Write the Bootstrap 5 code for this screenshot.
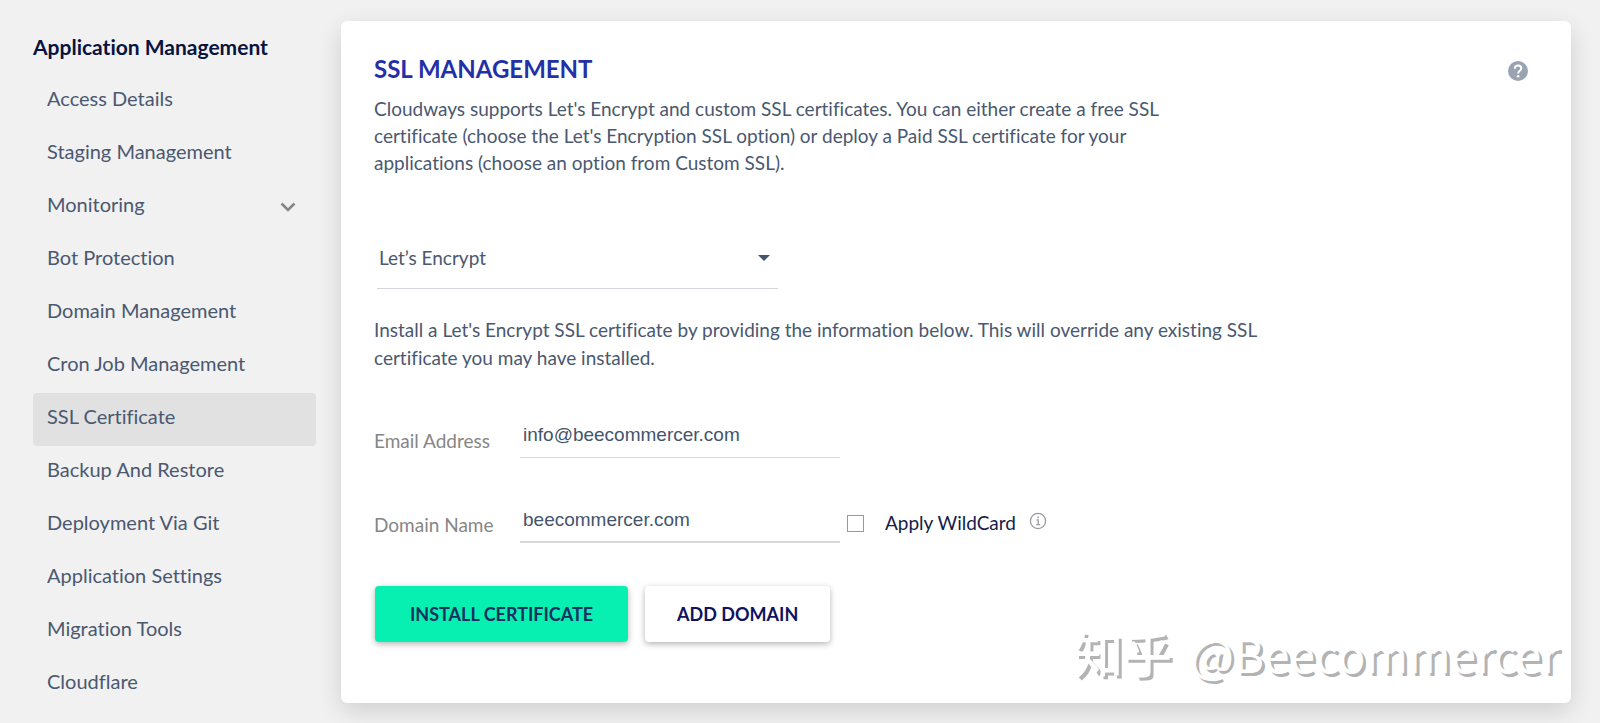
<!DOCTYPE html>
<html lang="en">
<head>
<meta charset="utf-8">
<meta name="viewport" content="width=device-width, initial-scale=1">
<title>SSL Management</title>
<link href="https://cdn.jsdelivr.net/npm/bootstrap@5.3.0/dist/css/bootstrap.min.css" rel="stylesheet">
<style>
  body { background: #f1f1f1; color: #4a5870; font-family: Lato, "Liberation Sans", sans-serif; font-size: 19px; line-height: 27px; font-variant-ligatures: none; }
  .app-shell { padding: 21px 29px 20px 33px; gap: 25px; }
  .side-menu { width: 283px; padding-top: 12px; }
  .side-title { font-size: 21px; line-height: 28px; margin-bottom: 14px; color: #0a1340; font-weight: 700; }
  .side-menu .nav-link { color: #4a5870; font-size: 20px; padding: 10px 14px 16px; border-radius: 4px; }
  .side-menu .nav-link.active { background: #e1e1e1; }
  .panel { border-radius: 6px; box-shadow: 0 8px 24px rgba(0, 0, 0, .14); padding: 32px 33px 61px; min-width: 0; }
  .panel-title { font-size: 24px; line-height: 32px; color: #2430a8; font-weight: 700; margin-bottom: 10px; }
  .intro { max-width: 840px; margin-bottom: 61px; }
  .hint { max-width: 920px; line-height: 28px; margin-bottom: 42px; }
  .line-select { width: 401px; height: 52px; margin: 0 3px 27px; padding: 0 32px 8px 2px; border: 0; border-bottom: 1px solid #d3d6da; border-radius: 0; color: #4a5870; font-size: 19px;
    background: #fff url("data:image/svg+xml,%3Csvg xmlns='http://www.w3.org/2000/svg' width='12' height='6'%3E%3Cpath d='M0 0h12L6 6z' fill='%2344546c'/%3E%3C/svg%3E") no-repeat right 8px top 18px / 12px 6px; }
  .field-label { width: 146px; color: #868686; padding-top: 13px; }
  .line-input { width: 320px; height: 44px; padding: 0 3px 1px; border: 0; border-bottom: 1px solid #d9d9d9; border-radius: 0; color: #44546c; font: 19px "Liberation Sans", sans-serif; }
  .line-input.thick { height: 45px; border-bottom-width: 2px; padding-bottom: 0; }
  .email-row { margin-bottom: 40px; }
  .domain-row { margin-bottom: 43px; }
  .wild-box.form-check-input { width: 17px; height: 17px; margin: 17px 21px 0 7px; border: 1px solid #9299a6; border-radius: 0; }
  .wild-label { color: #141c4a; padding-top: 11px; }
  .info-icon { margin: 14px 0 0 13px; }
  .actions { gap: 17px; padding-left: 1px; }
  .action { height: 56px; border: 0; border-radius: 4px; padding: 0 32px; font-size: 18px; font-weight: 700; box-shadow: 0 2px 6px rgba(0, 0, 0, .3); }
  .action-main, .action-main:hover { padding: 0 35px; background: #08f0b1; color: #16305f; }
  .action-plain, .action-plain:hover { background: #fff; color: #10125e; }
  .help-icon { margin: 8px 10px 0 0; }
  .watermark { position: absolute; right: 12px; bottom: 18px; font-family: "Noto Sans CJK SC", sans-serif; font-size: 46px; line-height: 64px; color: #fff; text-shadow: 3px 3px 0 #b3b3b3; white-space: nowrap; pointer-events: none; }
  .watermark-site { font-size: 49px; font-weight: 500; margin-right: 8px; }
</style>
</head>
<body>
<div class="app-shell d-flex align-items-start">
  <aside class="side-menu flex-shrink-0">
    <h2 class="side-title">Application Management</h2>
    <nav class="nav flex-column">
      <a class="nav-link" href="#">Access Details</a>
      <a class="nav-link" href="#">Staging Management</a>
      <a class="nav-link d-flex justify-content-between align-items-center" href="#">Monitoring
        <svg class="me-1" width="20" height="20" viewBox="0 0 20 20" fill="none" stroke="#868686" stroke-width="2.6" aria-hidden="true"><path d="M3.500 8.500l6.500 6.500 6.500-6.500"/></svg>
      </a>
      <a class="nav-link" href="#">Bot Protection</a>
      <a class="nav-link" href="#">Domain Management</a>
      <a class="nav-link" href="#">Cron Job Management</a>
      <a class="nav-link active" href="#" aria-current="page">SSL Certificate</a>
      <a class="nav-link" href="#">Backup And Restore</a>
      <a class="nav-link" href="#">Deployment Via Git</a>
      <a class="nav-link" href="#">Application Settings</a>
      <a class="nav-link" href="#">Migration Tools</a>
      <a class="nav-link" href="#">Cloudflare</a>
    </nav>
  </aside>

  <main class="panel bg-white flex-grow-1 position-relative">
    <div class="d-flex justify-content-between align-items-start">
      <h1 class="panel-title">SSL MANAGEMENT</h1>
      <a class="help-icon d-flex" href="#" aria-label="Help">
        <svg width="20" height="20" viewBox="0 0 20 20" aria-hidden="true"><circle cx="10" cy="10" r="10" fill="#9aa3b2"/><path d="M6.800 7.800c0-2 1.400-3.300 3.300-3.300s3.200 1.200 3.200 2.900c0 2.300-3.200 2.500-3.200 5" fill="none" stroke="#fff" stroke-width="2"/><circle cx="10.100" cy="15.200" r="1.300" fill="#fff"/></svg>
      </a>
    </div>
    <p class="intro">Cloudways supports Let's Encrypt and custom SSL certificates. You can either create a free SSL certificate (choose the Let's Encryption SSL option) or deploy a Paid SSL certificate for your applications (choose an option from Custom SSL).</p>

    <form>
      <select class="form-select line-select" aria-label="Certificate type">
        <option selected>Let’s Encrypt</option>
        <option>Custom SSL</option>
      </select>
      <p class="hint">Install a Let's Encrypt SSL certificate by providing the information below. This will override any existing SSL certificate you may have installed.</p>

      <div class="email-row d-flex align-items-start">
        <label class="field-label" for="email">Email Address</label>
        <input class="form-control line-input" id="email" type="email" value="info@beecommercer.com">
      </div>
      <div class="domain-row d-flex align-items-start">
        <label class="field-label" for="domain">Domain Name</label>
        <input class="form-control line-input thick" id="domain" type="text" value="beecommercer.com">
        <input class="form-check-input wild-box" id="wildcard" type="checkbox">
        <label class="wild-label" for="wildcard">Apply WildCard</label>
        <svg class="info-icon" width="18" height="18" viewBox="0 0 18 18" fill="none" stroke="#9a9a9f" stroke-width="1.300" aria-hidden="true"><circle cx="9" cy="9" r="7.600"/><path d="M7.500 7.800h1.700v4.700M7.200 12.600h4"/><circle cx="9" cy="5.300" r=".9" fill="#9a9a9f" stroke="none"/></svg>
      </div>
      <div class="actions d-flex">
        <button class="btn action action-main" type="submit">INSTALL CERTIFICATE</button>
        <button class="btn action action-plain" type="button">ADD DOMAIN</button>
      </div>
    </form>
    <div class="watermark" lang="zh"><span class="watermark-site">知乎</span> @Beecommercer</div>
  </main>
</div>
<script src="https://cdn.jsdelivr.net/npm/bootstrap@5.3.0/dist/js/bootstrap.bundle.min.js"></script>
</body>
</html>
